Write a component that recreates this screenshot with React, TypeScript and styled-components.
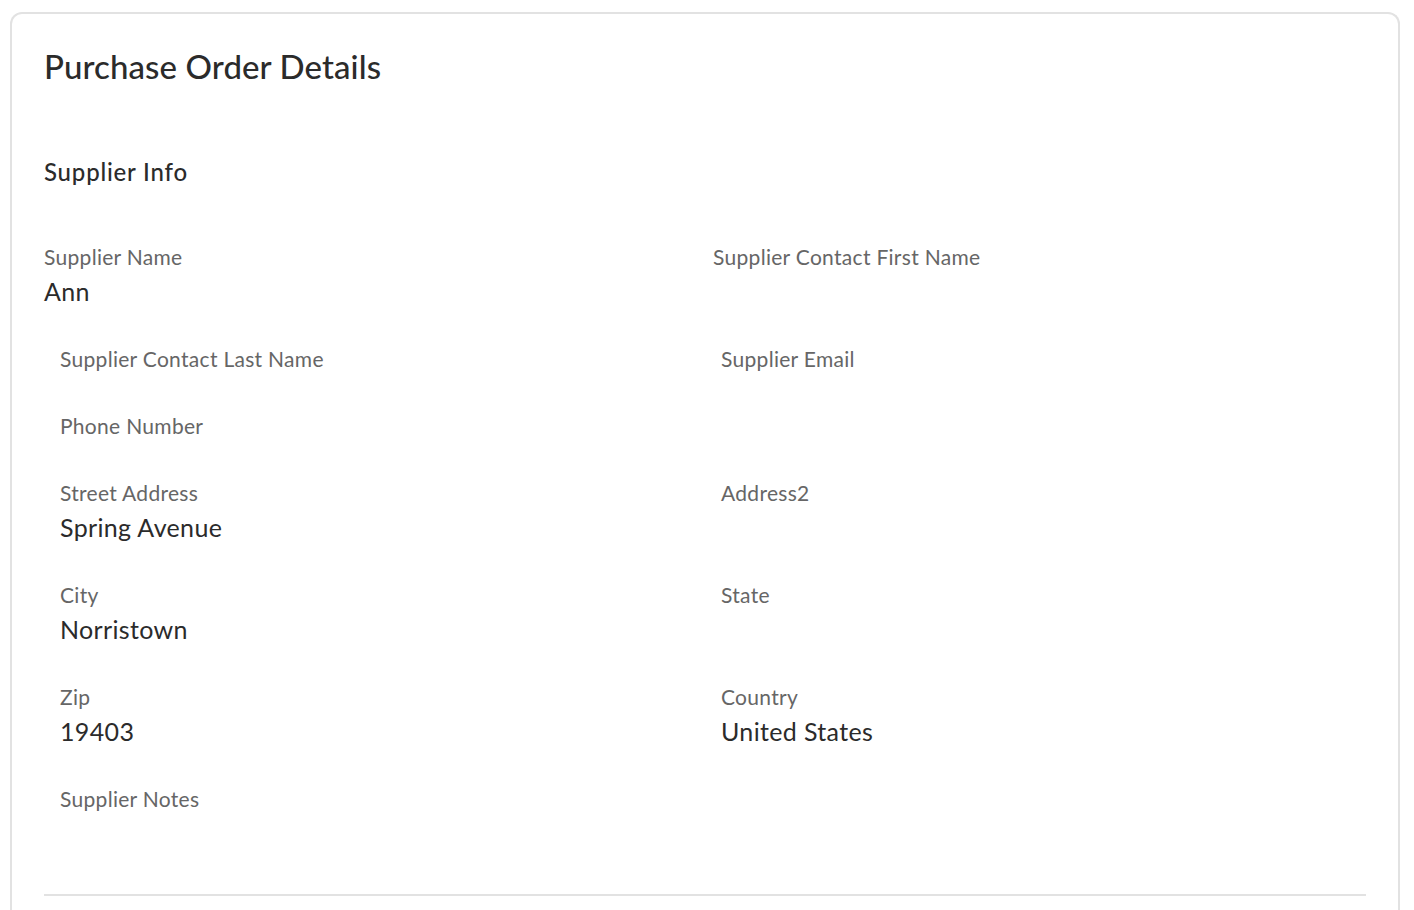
import React from 'react';
import styled, {createGlobalStyle} from 'styled-components';

const GlobalStyle = createGlobalStyle`
  body {
    margin: 0;
    padding: 12px 14px 0 10px;
    background: #ffffff;
    font-family: Lato, 'Open Sans', sans-serif;
    color: #2e2e2e;
  }
`;

const Card = styled.div`
  border: 2px solid #e2e2e2;
  border-bottom: none;
  border-radius: 12px 12px 0 0;
  padding: 31px 32px 40px;
  background: #fff;
`;

const Title = styled.h1`
  margin: 0;
  font-size: 33px;
  line-height: 42px;
  font-weight: 500;
  letter-spacing: 0.1px;
  color: #2b2b2b;
`;

const SectionTitle = styled.h2`
  margin: 69px 0 0;
  font-size: 24px;
  line-height: 32px;
  font-weight: 500;
  letter-spacing: 0.8px;
  color: #2b2b2b;
`;

const FieldGrid = styled.div<{$inset?: boolean}>`
  display: grid;
  grid-template-columns: 1fr 1fr;
  margin-left: ${p => (p.$inset ? '0' : '-16px')};
  margin-top: ${p => (p.$inset ? '32px' : '51px')};
  row-gap: 32px;
`;

const Field = styled.div`
  padding-left: 16px;
  min-height: 35px;
`;

const Label = styled.div`
  font-size: 21px;
  line-height: 35px;
  letter-spacing: 0.3px;
  color: #666666;
`;

const Value = styled.div`
  font-size: 25px;
  line-height: 35px;
  letter-spacing: 0.35px;
  color: #2b2b2b;
`;

const Divider = styled.hr`
  margin: 78px 0 0;
  border: none;
  border-top: 2px solid #e2e2e2;
`;

type Item = {label: string; value?: string};

const firstRow: Item[] = [
  {label: 'Supplier Name', value: 'Ann'},
  {label: 'Supplier Contact First Name'},
];

const fields: Item[] = [
  {label: 'Supplier Contact Last Name'},
  {label: 'Supplier Email'},
  {label: 'Phone Number'},
  {label: ''},
  {label: 'Street Address', value: 'Spring Avenue'},
  {label: 'Address2'},
  {label: 'City', value: 'Norristown'},
  {label: 'State'},
  {label: 'Zip', value: '19403'},
  {label: 'Country', value: 'United States'},
  {label: 'Supplier Notes'},
];

const renderField = (item: Item, i: number) => (
  <Field key={i}>
    {item.label && <Label>{item.label}</Label>}
    {item.value && <Value>{item.value}</Value>}
  </Field>
);

const App: React.FC = () => {
  return (
    <>
      <GlobalStyle />
      <Card>
        <Title>Purchase Order Details</Title>
        <SectionTitle>Supplier Info</SectionTitle>
        <FieldGrid>{firstRow.map(renderField)}</FieldGrid>
        <FieldGrid $inset>{fields.map(renderField)}</FieldGrid>
        <Divider />
      </Card>
    </>
  );
};

export default App;
